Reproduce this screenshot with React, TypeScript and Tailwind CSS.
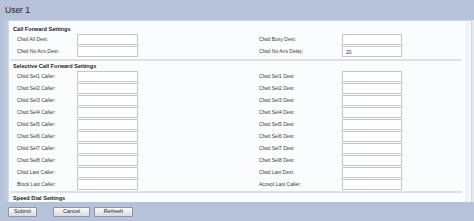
import React from "react";

type Pair = { left: string; right: string; rightValue?: string };

const callForward: Pair[] = [
  { left: "Cfwd All Dest:", right: "Cfwd Busy Dest:" },
  { left: "Cfwd No Ans Dest:", right: "Cfwd No Ans Delay:", rightValue: "20" },
];

const selective: Pair[] = [
  ...[1, 2, 3, 4, 5, 6, 7, 8].map((n) => ({
    left: `Cfwd Sel${n} Caller:`,
    right: `Cfwd Sel${n} Dest:`,
  })),
  { left: "Cfwd Last Caller:", right: "Cfwd Last Dest:" },
  { left: "Block Last Caller:", right: "Accept Last Caller:" },
];

const Field = ({ value, width }: { value?: string; width: string }) => (
  <input
    readOnly
    value={value ?? ""}
    className={
      "h-[11px] border border-[#c4c8ce] bg-white px-[3px] text-[5px] text-[#333] outline-none " +
      width
    }
  />
);

const Row = ({ item }: { item: Pair }) => (
  <div className="flex h-[12px] items-start text-[5px] text-[#3c3c3c]">
    <span className="flex h-[11px] w-[67px] items-center pl-[7px]">{item.left}</span>
    <Field width="w-[61px]" />
    <span className="w-[121px]" />
    <span className="flex h-[11px] w-[83px] items-center">{item.right}</span>
    <Field width="w-[60px]" value={item.rightValue} />
  </div>
);

const Heading = ({ text, className }: { text: string; className: string }) => (
  <div
    className={
      "flex items-center pl-[3px] text-[5.6px] font-bold text-[#222] " + className
    }
  >
    {text}
  </div>
);

const Separator = () => <div className="mr-[4px] h-[2px] bg-[#dde1e7]" />;

const Btn = ({ label, width }: { label: string; width: string }) => (
  <button
    className={
      "h-[10px] rounded-[1px] border border-[#8c95a3] bg-gradient-to-b from-[#fafafa] to-[#d9dce1] text-[5.5px] text-[#222] leading-none " +
      width
    }
  >
    {label}
  </button>
);

const App = () => {
  return (
    <div
      className="flex h-[221px] w-[474px] flex-col overflow-hidden bg-[#b6c2da]"
      style={{ fontFamily: '"Liberation Sans", Arial, sans-serif' }}
    >
      <div className="flex h-[20px] items-center pl-[5px] text-[8.5px] text-[#222]">User 1</div>

      <div className="flex h-[182px]">
        <div className="w-[8px] bg-gradient-to-r from-[#b3bfd8] to-[#c3cde0]" />
        <div className="flex flex-1 border-l border-t border-r border-[#d3d9e4] bg-[#f3f5f9]">
          <div className="mt-[1px] flex-1 overflow-hidden border-r border-[#e6e9ef] bg-[#fbfcfd] pl-[1px]">
            <Heading text="Call Forward Settings" className="h-[12px] pt-[2px]" />
            {callForward.map((item) => (
              <Row key={item.left} item={item} />
            ))}
            <div className="pt-[1px]">
              <Separator />
            </div>
            <Heading text="Selective Call Forward Settings" className="h-[10px]" />
            {selective.map((item) => (
              <Row key={item.left} item={item} />
            ))}
            <Separator />
            <Heading text="Speed Dial Settings" className="h-[10px]" />
            <Row item={{ left: "", right: "" }} />
          </div>
          <div className="w-[4px] bg-[#f3f5f9]" />
        </div>
        <div className="w-[2px] bg-[#e4e8ef]" />
      </div>

      <div className="flex gap-[4px] pl-[8px] pt-[5px]">
        <Btn label="Submit" width="w-[29px]" />
        <span className="w-[8px]" />
        <Btn label="Cancel" width="w-[37px]" />
        <Btn label="Refresh" width="w-[39px]" />
      </div>
    </div>
  );
};

export default App;
